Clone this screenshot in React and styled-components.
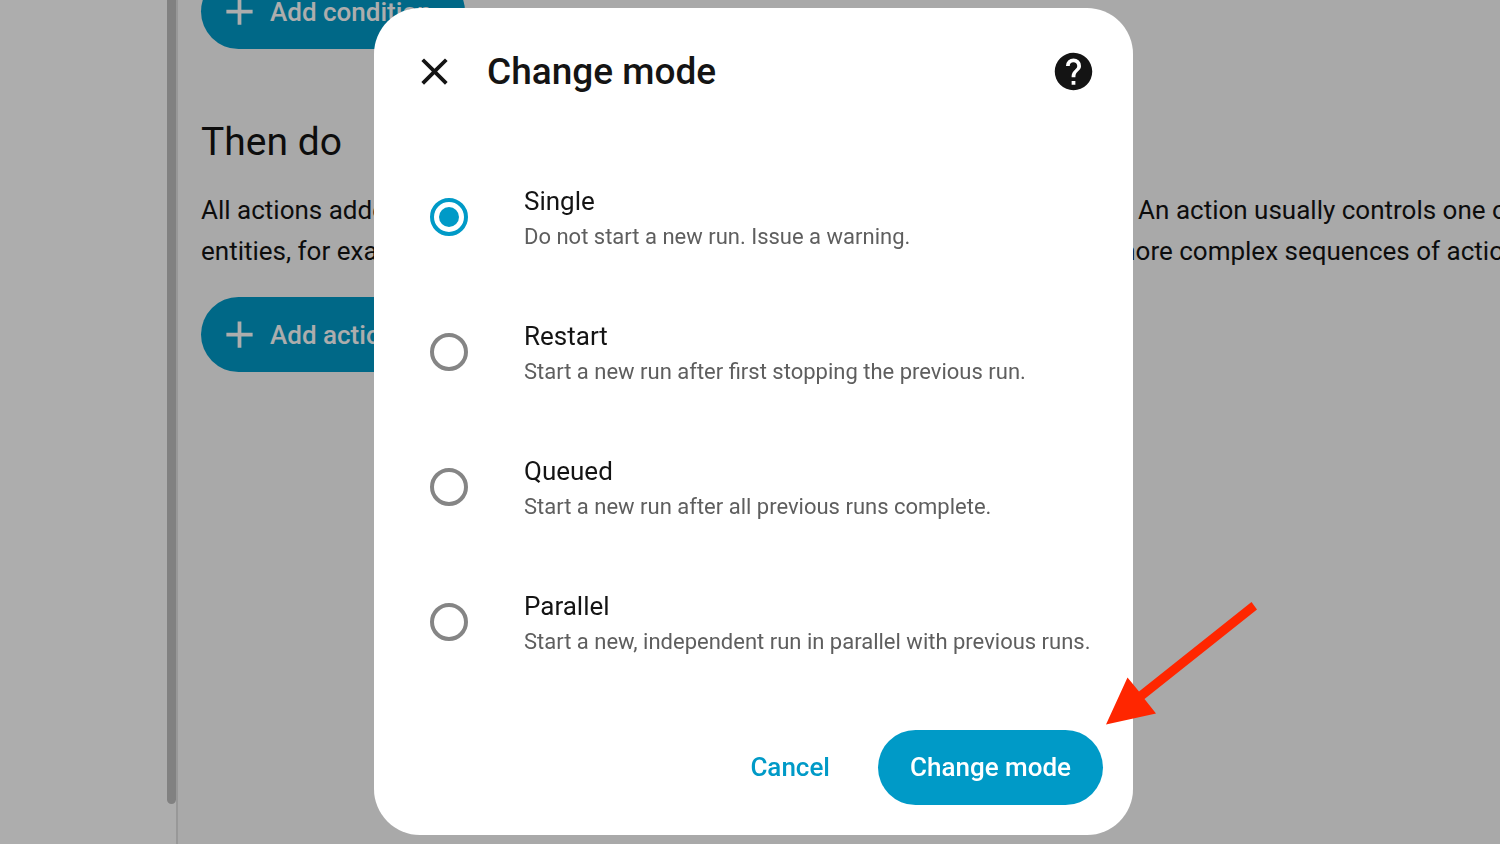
import React, { useState } from "react";
import styled, { createGlobalStyle } from "styled-components";

const GlobalStyle = createGlobalStyle`
  * {
    box-sizing: border-box;
  }
  body {
    margin: 0;
    overflow: hidden;
    background: #fafafa;
    color: #141414;
    font-family: Roboto, sans-serif;
  }
  button {
    font-family: inherit;
    cursor: pointer;
  }
`;

const Page = styled.div`
  display: flex;
  height: 100vh;
`;

const Sidebar = styled.aside`
  flex: 0 0 178px;
  display: flex;
  justify-content: flex-end;
  padding-bottom: 40px;
  background: #fff;
  border-right: 2px solid #e0e0e0;
`;

const ScrollThumb = styled.div`
  width: 9px;
  background: #bfbfbf;
  border-radius: 0 0 5px 5px;
`;

const Main = styled.main`
  flex: 1;
  min-width: 0;
  display: flex;
  flex-direction: column;
  align-items: flex-start;
  padding-left: 23px;
  overflow: hidden;
`;

const AddButton = styled.button`
  display: flex;
  align-items: center;
  gap: 8px;
  flex-shrink: 0;
  height: 75px;
  margin-top: ${props => (props.$scrolled ? "-26px" : "25px")};
  padding: 0 33px 0 16px;
  border: none;
  border-radius: 38px;
  background: #009ac7;
  color: #fff;
  font-size: 26px;
  font-weight: 500;
`;

const SectionTitle = styled.h2`
  margin: 69px 0 0;
  font-size: 39px;
  font-weight: 400;
  line-height: 48px;
`;

const Description = styled.p`
  margin: 24px 0 0;
  font-size: 26px;
  line-height: 41px;
  white-space: nowrap;
`;

const Backdrop = styled.div`
  position: fixed;
  inset: 0;
  display: flex;
  align-items: center;
  justify-content: center;
  padding: 0 0 2px 7px;
  background: rgba(0, 0, 0, 0.32);
`;

const Dialog = styled.form`
  position: relative;
  width: 759px;
  max-width: 100%;
  background: #fff;
  border-radius: 46px;
`;

const Header = styled.header`
  display: flex;
  align-items: center;
  gap: 8px;
  padding: 19px 15px 33px;
  h1 {
    flex: 1;
    margin: 0;
    font-size: 37px;
    font-weight: 500;
    line-height: 48px;
  }
`;

const IconButton = styled.button`
  display: flex;
  align-items: center;
  justify-content: center;
  width: 90px;
  height: 90px;
  padding: 0;
  border: none;
  border-radius: 50%;
  background: none;
  color: #141414;
`;

const ModeList = styled.div`
  display: flex;
  flex-direction: column;
`;

const ModeRow = styled.label`
  display: flex;
  align-items: center;
  gap: 56px;
  height: 135px;
  padding-left: 56px;
  white-space: nowrap;
  cursor: pointer;
`;

const Radio = styled.input`
  appearance: none;
  flex-shrink: 0;
  display: grid;
  place-items: center;
  width: 38px;
  height: 38px;
  margin: 0;
  border: 4px solid #858585;
  border-radius: 50%;
  &:checked {
    border-color: #009ac7;
  }
  &:checked::before {
    content: "";
    width: 20px;
    height: 20px;
    border-radius: 50%;
    background: #009ac7;
  }
`;

const ModeText = styled.span`
  display: flex;
  flex-direction: column;
  padding-top: 4px;
  font-size: 26px;
  line-height: 36px;
  small {
    color: #5e5e5e;
    font-size: 22px;
  }
`;

const Footer = styled.footer`
  display: flex;
  justify-content: flex-end;
  gap: 16px;
  padding: 40px 30px 30px;
`;

const DialogButton = styled.button`
  height: 75px;
  padding: 0 32px;
  border: none;
  border-radius: 38px;
  background: ${props => (props.$filled ? "#009ac7" : "none")};
  color: ${props => (props.$filled ? "#fff" : "#009ac7")};
  font-size: 26px;
  font-weight: 500;
`;

const Arrow = styled.svg`
  position: absolute;
  right: -127px;
  bottom: 105px;
  width: 160px;
  height: 130px;
  pointer-events: none;
`;

const icons = {
  close:
    "M19,6.41L17.59,5L12,10.59L6.41,5L5,6.41L10.59,12L5,17.59L6.41,19L12,13.41L17.59,19L19,17.59L13.41,12L19,6.41Z",
  help:
    "M15.07,11.25L14.17,12.17C13.45,12.89 13,13.5 13,15H11V14.5C11,13.39 11.45,12.39 12.17,11.67L13.41,10.41C13.78,10.05 14,9.55 14,9C14,7.89 13.1,7 12,7A2,2 0 0,0 10,9H8A4,4 0 0,1 12,5A4,4 0 0,1 16,9C16,9.88 15.64,10.67 15.07,11.25M13,19H11V17H13M12,2A10,10 0 0,0 2,12A10,10 0 0,0 12,22A10,10 0 0,0 22,12C22,6.47 17.5,2 12,2Z",
  plus: "M19,13H13V19H11V13H5V11H11V5H13V11H19V13Z"
};

const Icon = ({ name }) => (
  <svg width="45" height="45" viewBox="0 0 24 24" fill="currentColor" aria-hidden="true">
    <path d={icons[name]} />
  </svg>
);

const modes = [
  {
    value: "single",
    label: "Single",
    description: "Do not start a new run. Issue a warning."
  },
  {
    value: "restart",
    label: "Restart",
    description: "Start a new run after first stopping the previous run."
  },
  {
    value: "queued",
    label: "Queued",
    description: "Start a new run after all previous runs complete."
  },
  {
    value: "parallel",
    label: "Parallel",
    description: "Start a new, independent run in parallel with previous runs."
  }
];

const ChangeModeDialog = () => {
  const [mode, setMode] = useState("single");

  return (
    <Dialog role="dialog" aria-labelledby="dialog-title" onSubmit={e => e.preventDefault()}>
      <Header>
        <IconButton type="button" aria-label="Close">
          <Icon name="close" />
        </IconButton>
        <h1 id="dialog-title">Change mode</h1>
        <IconButton type="button" aria-label="Help">
          <Icon name="help" />
        </IconButton>
      </Header>
      <ModeList role="radiogroup" aria-labelledby="dialog-title">
        {modes.map(({ value, label, description }) => (
          <ModeRow key={value}>
            <Radio
              type="radio"
              name="mode"
              value={value}
              checked={mode === value}
              onChange={() => setMode(value)}
            />
            <ModeText>
              {label}
              <small>{description}</small>
            </ModeText>
          </ModeRow>
        ))}
      </ModeList>
      <Footer>
        <DialogButton type="button">Cancel</DialogButton>
        <DialogButton type="submit" $filled>
          Change mode
        </DialogButton>
      </Footer>
      <Arrow viewBox="0 0 160 130" aria-hidden="true">
        <path
          fill="#ff2600"
          d="M6 124.500L27.500 77.500L39 91.500L151.500 2L157 9.500L44.500 99L56 113.500Z"
        />
      </Arrow>
    </Dialog>
  );
};

const App = () => (
  <>
    <GlobalStyle />
    <Page>
      <Sidebar>
        <ScrollThumb />
      </Sidebar>
      <Main>
        <AddButton type="button" $scrolled>
          <Icon name="plus" />
          Add condition
        </AddButton>
        <SectionTitle>Then do</SectionTitle>
        <Description>
          All actions added here will be performed in sequence when the automation
          runs.&nbsp; An action usually controls one of your areas, devices, or
          <br />
          entities, for example: 'Turn on the lights'.&nbsp; You can use building
          blocks to create more complex sequences of actions.
        </Description>
        <AddButton type="button">
          <Icon name="plus" />
          Add action
        </AddButton>
      </Main>
    </Page>
    <Backdrop>
      <ChangeModeDialog />
    </Backdrop>
  </>
);

export default App;
